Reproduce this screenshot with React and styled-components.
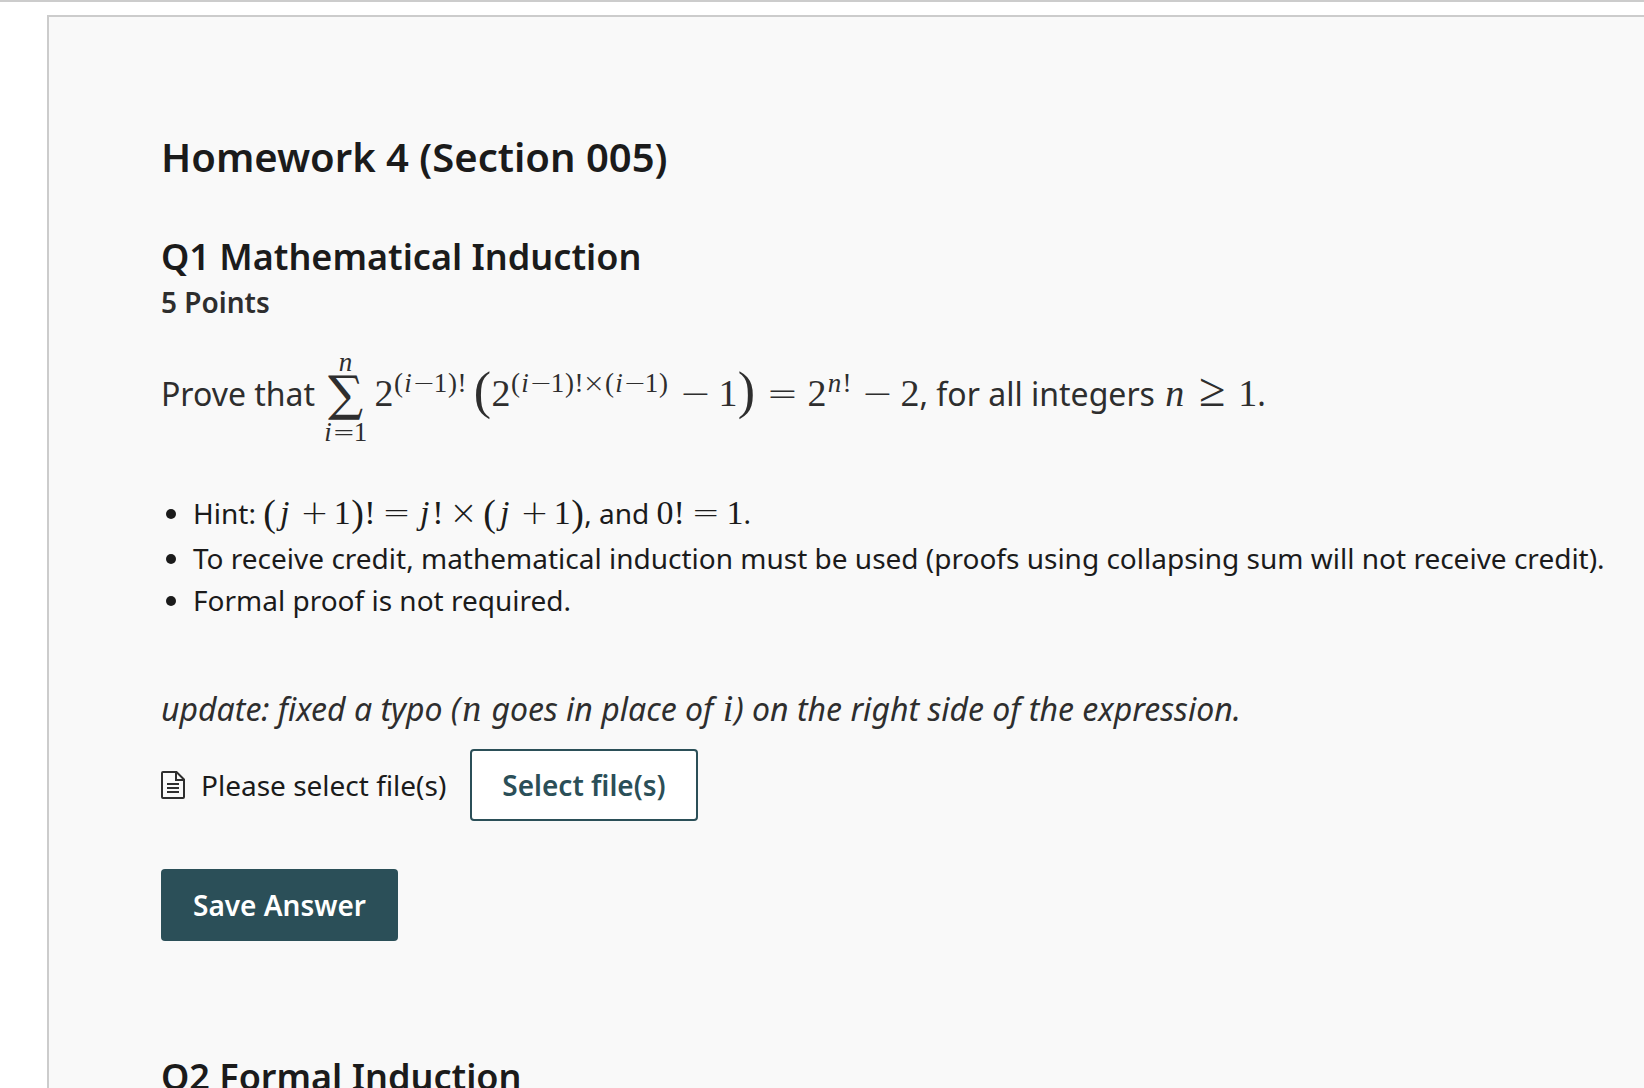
import styled, {createGlobalStyle} from "styled-components";

const GlobalStyle = createGlobalStyle`
    *, *::before, *::after {
        box-sizing: border-box;
    }

    body {
        margin: 0;
        background: #fff;
        color: #1b1b1b;
        font-family: "Noto Sans", sans-serif;
        font-size: 28px;
        line-height: 42px;
    }
`;

const Page = styled.div`
    height: 100vh;
    overflow: hidden;
    padding: 13px 0 0 47px;
    border-top: 2px solid #ccc;
`;

const Panel = styled.main`
    min-height: 100%;
    padding: 110px 0 0 112px;
    border: 2px solid #ccc;
    border-right: none;
    border-bottom: none;
    background: #f9f9f9;
`;

const Title = styled.h1`
    margin: 0 0 46px;
    font-size: 40px;
    font-weight: 600;
    line-height: 60px;
`;

const Question = styled.section`
    margin-bottom: 112px;
`;

const QuestionTitle = styled.h2`
    margin: 0;
    font-size: 36px;
    font-weight: 600;
    line-height: 48px;
`;

const Points = styled.div`
    color: #2e2e2e;
    font-weight: 600;
`;

const Paragraph = styled.p`
    margin: ${(props) => props.$margin};
    color: #2e2e2e;
    font-size: 32px;
    line-height: 48px;
`;

const Hints = styled.ul`
    margin: 0;
    padding-left: 32px;
`;

const Hint = styled.li`
    padding-bottom: ${(props) => (props.$spaced ? "3px" : "0")};
`;

const MathText = styled.span`
    font-family: "Liberation Serif", serif;
    font-size: ${(props) => (props.$small ? "34px" : "38px")};
    font-style: normal;
    line-height: 1;
    white-space: nowrap;
`;

const Sym = styled.span`
    display: inline-block;
    width: ${(props) => props.$w}px;
    text-align: center;
    line-height: 1;
`;

const Var = styled(Sym)`
    font-style: italic;
`;

const Op = styled(Sym)`
    margin: 0 ${(props) => props.$gap || 0}px;
    font-family: "DejaVu Sans", sans-serif;
    font-weight: 200;
`;

const Geq = styled(Sym)`
    margin: 0 11px;
    font-size: 48px;
    line-height: 0;
`;

const Delim = styled(Sym)`
    margin-left: ${(props) => props.$before || 0}px;
    font-size: ${(props) => props.$size}px;
    line-height: 0;
    vertical-align: -2px;
`;

const Sup = styled.span`
    margin-right: 2px;
    font-size: 27px;
    line-height: 0;
    vertical-align: 14px;
`;

const Limits = styled.span`
    display: inline-flex;
    flex-direction: column;
    align-items: center;
    margin-right: 7px;
    font-size: 27px;
    line-height: 26px;
    vertical-align: middle;
`;

const Sigma = styled.span`
    font-family: "DejaVu Math TeX Gyre", "DejaVu Serif", serif;
    font-size: 42px;
    line-height: 42px;
`;

const UploadRow = styled.div`
    display: flex;
    align-items: center;
    margin-bottom: 48px;
`;

const UploadText = styled.span`
    margin: 0 24px 0 16px;
`;

const Button = styled.button`
    height: 72px;
    padding: 0 ${(props) => (props.$primary ? 32 : 30)}px;
    border: ${(props) => (props.$primary ? "none" : "2px solid #2b4f58")};
    border-radius: 4px;
    background: ${(props) => (props.$primary ? "#2b4f58" : "#fff")};
    color: ${(props) => (props.$primary ? "#fff" : "#2b4f58")};
    font: inherit;
    font-weight: 600;
    cursor: pointer;
`;

const FileIcon = () => (
    <svg width="24" height="28" viewBox="0 0 24 28" fill="none" stroke="#2e2e2e" strokeWidth="2" aria-hidden="true">
        <path d="M2 1H15.5L23 8.5V26a1 1 0 0 1-1 1H2a1 1 0 0 1-1-1V2a1 1 0 0 1 1-1Z"/>
        <path d="M15 1V9H23"/>
        <path d="M6 13H18M6 17H18M6 21H18"/>
    </svg>
);

// (i-1) in superscript or limit size
const IMinusOne = () => (
    <>
        <Sym $w={10}>(</Sym>
        <Var $w={9}>i</Var>
        <Op $w={21}>−</Op>
        <Sym $w={14}>1</Sym>
        <Sym $w={10}>)</Sym>
    </>
);

const JPlusOne = () => (
    <>
        <Delim $w={13} $size={38}>(</Delim>
        <Var $w={17}>j</Var>
        <Op $w={26} $gap={7}>+</Op>
        <Sym $w={18}>1</Sym>
        <Delim $w={13} $size={38}>)</Delim>
    </>
);

const SumFormula = () => (
    <MathText>
        <Limits>
            <Var $w={16}>n</Var>
            <Sigma>∑</Sigma>
            <span>
                <Var $w={9}>i</Var>
                <Op $w={21}>=</Op>
                <Sym $w={14}>1</Sym>
            </span>
        </Limits>
        <Sym $w={19}>2</Sym>
        <Sup><IMinusOne/><Sym $w={8}>!</Sym></Sup>
        <Delim $w={18} $before={6} $size={52}>(</Delim>
        <Sym $w={19}>2</Sym>
        <Sup><IMinusOne/><Sym $w={8}>!</Sym><Op $w={22}>×</Op><IMinusOne/></Sup>
        <Op $w={30} $gap={9}>−</Op>
        <Sym $w={19}>1</Sym>
        <Delim $w={18} $size={52}>)</Delim>
        <Op $w={30} $gap={11}>=</Op>
        <Sym $w={19}>2</Sym>
        <Sup><Var $w={16}>n</Var><Sym $w={8}>!</Sym></Sup>
        <Op $w={30} $gap={9}>−</Op>
        <Sym $w={19}>2</Sym>
    </MathText>
);

const HintFormula = () => (
    <MathText $small>
        <JPlusOne/>
        <Sym $w={9}>!</Sym>
        <Op $w={26} $gap={9}>=</Op>
        <Var $w={15}>j</Var>
        <Sym $w={9}>!</Sym>
        <Op $w={26} $gap={8}>×</Op>
        <JPlusOne/>
    </MathText>
);

function App() {
    return (
        <>
            <GlobalStyle/>
            <Page>
                <Panel>
                    <Title>Homework 4 (Section 005)</Title>
                    <Question>
                        <QuestionTitle>Q1 Mathematical Induction</QuestionTitle>
                        <Points>5 Points</Points>
                        <Paragraph $margin="26px 0 46px">
                            Prove that <SumFormula/>, for all integers{" "}
                            <MathText>
                                <Var $w={23}>n</Var>
                                <Geq $w={30}>≥</Geq>
                                <Sym $w={19}>1</Sym>
                            </MathText>.
                        </Paragraph>
                        <Hints>
                            <Hint $spaced>
                                Hint: <HintFormula/>, and{" "}
                                <MathText $small>
                                    <Sym $w={17}>0</Sym>
                                    <Sym $w={9}>!</Sym>
                                    <Op $w={26} $gap={9}>=</Op>
                                    <Sym $w={17}>1</Sym>
                                </MathText>.
                            </Hint>
                            <Hint>
                                To receive credit, mathematical induction must be used (proofs using collapsing sum
                                will not receive credit).
                            </Hint>
                            <Hint>Formal proof is not required.</Hint>
                        </Hints>
                        <Paragraph $margin="64px 0 16px">
                            <em>
                                update: fixed a typo (<MathText><Var $w={23}>n</Var></MathText> goes in place
                                of <MathText><Var $w={13}>i</Var></MathText>) on the right side of the expression.
                            </em>
                        </Paragraph>
                        <UploadRow>
                            <FileIcon/>
                            <UploadText>Please select file(s)</UploadText>
                            <Button type="button">Select file(s)</Button>
                        </UploadRow>
                        <Button type="button" $primary>Save Answer</Button>
                    </Question>
                    <QuestionTitle>Q2 Formal Induction</QuestionTitle>
                </Panel>
            </Page>
        </>
    );
}

export default App;
